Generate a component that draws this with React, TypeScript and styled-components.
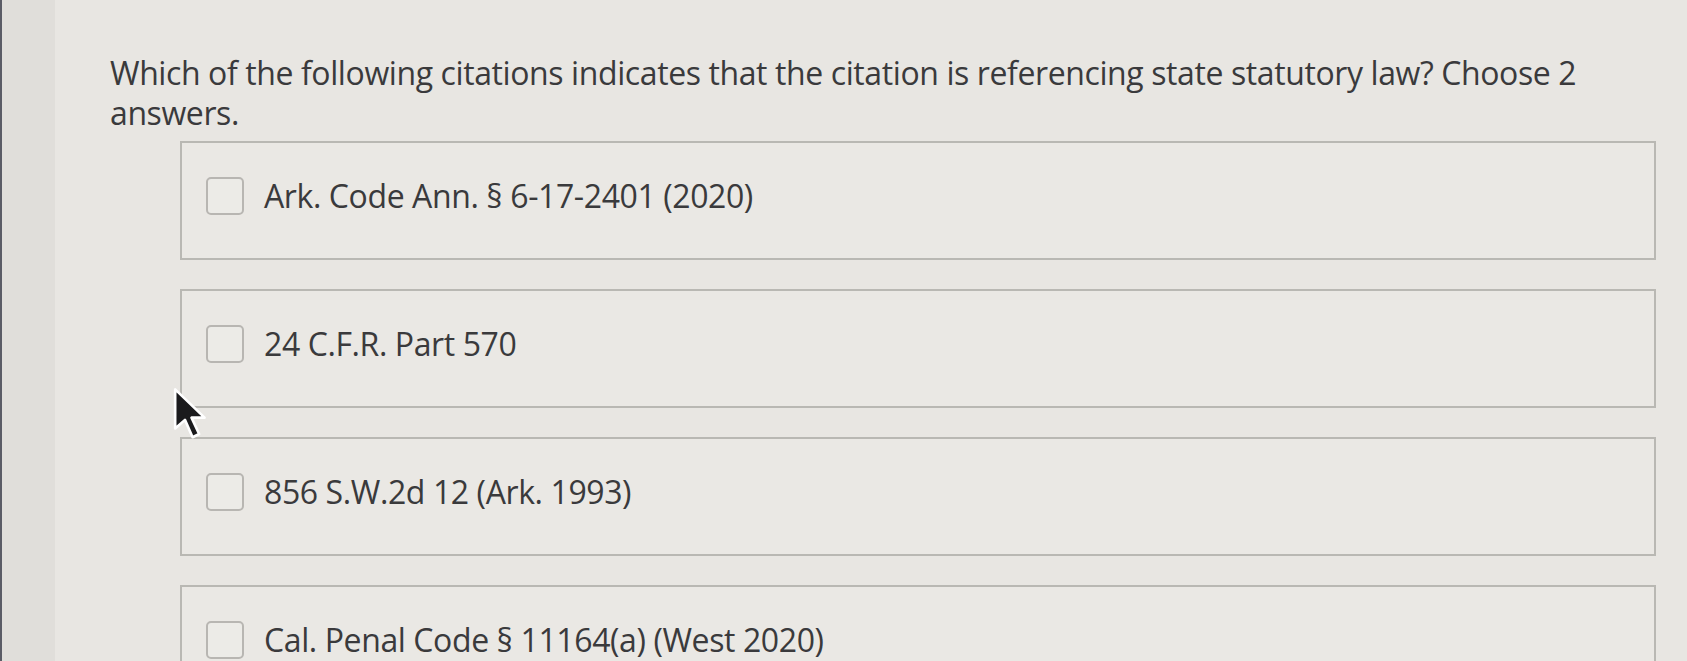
import styled, { createGlobalStyle } from "styled-components";

const GlobalStyle = createGlobalStyle`
  html, body {
    margin: 0;
    padding: 0;
    background: #e8e6e2;
  }
  body {
    font-family: "Open Sans", "Liberation Sans", sans-serif;
    color: #3a3a3c;
  }
`;

const options = [
  "Ark. Code Ann. § 6-17-2401 (2020)",
  "24 C.F.R. Part 570",
  "856 S.W.2d 12 (Ark. 1993)",
  "Cal. Penal Code § 11164(a) (West 2020)",
];

const Page = styled.div`
  display: flex;
  height: 661px;
  position: relative;
  overflow: hidden;
`;

const Gutter = styled.div`
  width: 53px;
  flex-shrink: 0;
  background: #e0deda;
  border-left: 2px solid #5b5c66;
`;

const Main = styled.main`
  flex: 1;
  padding: 53px 31px 0 55px;
`;

const Question = styled.p`
  margin: 0;
  max-width: 1500px;
  font-size: 32px;
  line-height: 40px;
  letter-spacing: -0.4px;
`;

const OptionList = styled.div`
  display: flex;
  flex-direction: column;
  gap: 29px;
  margin: 8px 0 0 70px;
`;

const OptionBox = styled.label`
  display: flex;
  align-items: flex-start;
  height: 119px;
  box-sizing: border-box;
  padding: 34px 24px 0;
  border: 2px solid #b9b8b3;
  background: #eae8e4;
  cursor: pointer;
`;

const OptionRow = styled.span`
  display: flex;
  align-items: center;
  gap: 20px;
`;

const Check = styled.span`
  width: 38px;
  height: 38px;
  flex-shrink: 0;
  box-sizing: border-box;
  border: 2px solid #b8b6b2;
  border-radius: 5px;
  background: #ecebe7;
`;

const OptionText = styled.span`
  font-size: 32px;
  line-height: 36px;
  letter-spacing: -0.4px;
`;

const Cursor = styled.svg`
  position: absolute;
  left: 173px;
  top: 387px;
`;

export default function App() {
  return (
    <>
      <GlobalStyle />
      <Page>
        <Gutter />
        <Main>
          <Question>
            Which of the following citations indicates that the citation is
            referencing state statutory law? Choose 2 answers.
          </Question>
          <OptionList>
            {options.map((o) => (
              <OptionBox key={o}>
                <OptionRow>
                  <Check />
                  <OptionText>{o}</OptionText>
                </OptionRow>
              </OptionBox>
            ))}
          </OptionList>
        </Main>
        <Cursor width="37" height="57" viewBox="0 0 17 26">
          <path
            d="M1 1 L1 19 L5.5 15 L9 23 L12 21.5 L8.5 14 L14.5 14 Z"
            fill="#1b1b1d"
            stroke="#ffffff"
            strokeWidth="1.2"
            strokeLinejoin="round"
          />
        </Cursor>
      </Page>
    </>
  );
}
